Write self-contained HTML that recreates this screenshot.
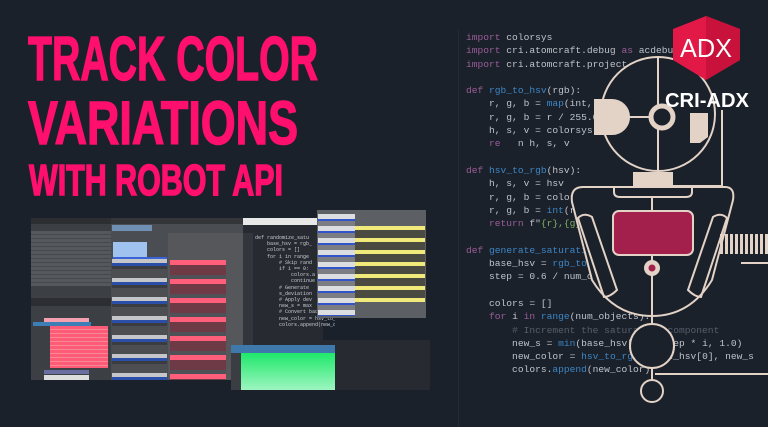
<!DOCTYPE html>
<html><head><meta charset="utf-8"><style>
*{margin:0;padding:0;box-sizing:border-box}
html,body{width:768px;height:427px}
body{background:#1b212b;overflow:hidden;position:relative;font-family:"Liberation Sans",sans-serif}
.a{position:absolute}
.code{position:absolute;left:466px;top:31px;font-family:"Liberation Mono",monospace;font-size:9.6px;line-height:13.3px;color:#bfc3c9;white-space:pre}
.k{color:#9a5d97}.f{color:#3c86c4}.g{color:#82b062}.c{color:#555e6a}
</style></head><body>
<div class="a" style="left:458px;top:30px;width:1px;height:397px;background:#242b35"></div>
<div class="code"><span class="k">import</span> colorsys
<span class="k">import</span> cri.atomcraft.debug <span class="k">as</span> acdebug
<span class="k">import</span> cri.atomcraft.project

<span class="k">def</span> <span class="f">rgb_to_hsv</span>(rgb):
    r, g, b = <span class="f">map</span>(int, rgb)
    r, g, b = r / 255.0, g / 255.0
    h, s, v = colorsys.rgb_to_hsv
    <span class="k">re  </span> n h, s, v

<span class="k">def</span> <span class="f">hsv_to_rgb</span>(hsv):
    h, s, v = hsv
    r, g, b = colorsys
    r, g, b = <span class="f">int</span>(r
    <span class="k">return</span> f"<span class="g">{r},{g}</span>"

<span class="k">def</span> <span class="f">generate_saturation</span>
    base_hsv = <span class="f">rgb_to_hsv</span>
    step = 0.6 / num_objects

    colors = []
    <span class="k">for</span> i <span class="k">in</span> <span class="f">range</span>(num_objects):
        <span class="c"># Increment the saturation component</span>
        new_s = <span class="f">min</span>(base_hsv[1] + step * i, 1.0)
        new_color = <span class="f">hsv_to_rgb</span>((base_hsv[0], new_s
        colors.<span class="f">append</span>(new_color)</div>

<svg class="a" style="left:0;top:0" width="768" height="427">
<g fill="none" stroke="#e3d2c6" stroke-width="2">
<circle cx="658" cy="114" r="57" fill="#1b212b"/>
<line x1="658" y1="57" x2="658" y2="172"/>
<path d="M722 150 V186 H672"/>
<line x1="722" y1="110" x2="722" y2="150"/>
<path d="M595 100 H612 A17 17 0 0 1 612 134 H595 Z" fill="#e3d2c6"/>
<line x1="620" y1="117" x2="650" y2="117"/>
<circle cx="662" cy="117" r="11" fill="#1b212b" stroke-width="5"/>
<path d="M690 113 H708 V137 L700 143 H690 Z" fill="#e3d2c6" stroke="none"/>
<rect x="633" y="172" width="40" height="15" fill="#e3d2c6" stroke="none"/>
<path d="M583 187 H725 Q735 187 733 200 L712 280 Q690 316 652 316 Q614 316 592 280 L572 202 Q570 187 583 187 Z" fill="#1b212b"/>
<path d="M614 188 V192 Q614 197 620 197 H686 Q692 197 692 192 V188"/>
<line x1="652" y1="197" x2="652" y2="212"/>
<path d="M578 218 Q584 212 592 217 L617 290 Q610 297 604 297 Z"/>
<path d="M727 218 Q721 212 713 217 L688 290 Q695 297 701 297 Z"/>
<rect x="613" y="211" width="80" height="44" rx="6" fill="#a3204d"/>
<line x1="652" y1="255" x2="652" y2="324"/>
<circle cx="652" cy="268" r="8" fill="#e3d2c6" stroke="none"/>
<circle cx="652" cy="268" r="3.5" fill="#a3204d" stroke="none"/>
<circle cx="652" cy="346" r="22" fill="#1b212b"/>
<line x1="652" y1="368" x2="652" y2="380"/>
<circle cx="652" cy="391" r="11"/>
<line x1="655" y1="374" x2="768" y2="374"/>
<line x1="741" y1="263" x2="768" y2="263"/>
</g>
<g fill="#e3d2c6">
<rect x="720" y="234" width="3" height="20"/><rect x="725" y="234" width="3" height="20"/><rect x="730" y="234" width="3" height="20"/><rect x="735" y="234" width="3" height="20"/><rect x="740" y="234" width="3" height="20"/><rect x="745" y="234" width="3" height="20"/><rect x="750" y="234" width="3" height="20"/><rect x="755" y="234" width="3" height="20"/><rect x="760" y="234" width="3" height="20"/><rect x="765" y="234" width="3" height="20"/>
</g>
<path d="M706 16 L740 29 V60 L706 80 L673 60 V29 Z" fill="#e21846"/>
<path d="M706 16 L740 29 V60 L706 80 Z" fill="#c8123c"/>
<text x="706" y="57" fill="#fff" font-size="26" text-anchor="middle" textLength="52" lengthAdjust="spacingAndGlyphs" font-family="Liberation Sans">ADX</text>
<text x="707" y="107" fill="#fff" font-size="20" font-weight="bold" text-anchor="middle" textLength="84" lengthAdjust="spacingAndGlyphs" font-family="Liberation Sans">CRI-ADX</text>
<g font-family="'Liberation Sans',sans-serif" font-weight="bold" fill="#ff0f6e" stroke="#ff0f6e" stroke-width="1.5">
<text x="28" y="80" font-size="62" textLength="290" lengthAdjust="spacingAndGlyphs">TRACK COLOR</text>
<text x="28" y="144" font-size="61" textLength="270" lengthAdjust="spacingAndGlyphs">VARIATIONS</text>
<text x="29" y="195" font-size="44" textLength="254" lengthAdjust="spacingAndGlyphs">WITH ROBOT API</text>
</g>
</svg>

<!-- collage -->
<div class="a" style="left:31px;top:218px;width:80px;height:162px;background:#3c3f44"></div>
<div class="a" style="left:31px;top:218px;width:80px;height:6px;background:#2c2e32"></div>
<div class="a" style="left:31px;top:231px;width:80px;height:55px;background:repeating-linear-gradient(#55585d 0 3px,#45484d 3px 4px)"></div>
<div class="a" style="left:31px;top:298px;width:80px;height:8px;background:#2c2e32"></div>
<div class="a" style="left:44px;top:318px;width:45px;height:7px;background:#f4a0ae"></div>
<div class="a" style="left:33px;top:322px;width:58px;height:4px;background:#3d7eb6"></div>
<div class="a" style="left:50px;top:326px;width:58px;height:42px;background:repeating-linear-gradient(#ff5a76 0 3px,#f48899 3px 4px)"></div>
<div class="a" style="left:44px;top:370px;width:45px;height:4px;background:#6a6ea0"></div>
<div class="a" style="left:44px;top:375px;width:45px;height:5px;background:#ddd"></div>
<div class="a" style="left:111px;top:218px;width:133px;height:162px;background:#4a4d52"></div>
<div class="a" style="left:111px;top:218px;width:133px;height:6px;background:#333538"></div>
<div class="a" style="left:112px;top:225px;width:40px;height:6px;background:#6f8fb3"></div>
<div class="a" style="left:168px;top:233px;width:76px;height:147px;background:#55575b"></div>
<div class="a" style="left:113px;top:242px;width:34px;height:17px;background:#9fc3ee"></div>
<div class="a" style="left:113px;top:257px;width:54px;height:5px;background:#3a63d8"></div>
<div class="a" style="left:112px;top:259px;width:55px;height:121px;background:repeating-linear-gradient(#c5c6ca 0 4px,#2b4ea8 4px 7px,#3a3c40 7px 10px,#4c4e52 10px 19px)"></div>
<div class="a" style="left:170px;top:260px;width:56px;height:120px;background:repeating-linear-gradient(#ff5f7a 0 5px,#6e3a45 5px 15px,#4f5156 15px 19px)"></div>
<div class="a" style="left:243px;top:218px;width:80px;height:162px;background:#272b31"></div>
<div class="a" style="left:243px;top:218px;width:80px;height:7px;background:#e8e8e8"></div>
<div class="a" style="left:243px;top:233px;width:10px;height:147px;background:#33373d"></div>
<div class="a" style="left:255px;top:235px;width:80px;height:95px;font-family:'Liberation Mono',monospace;font-size:5px;line-height:6.2px;color:#c8ccd2;white-space:pre;overflow:hidden">def randomize_satu
    base_hsv = rgb_
    colors = []
    for i in range
        # Skip rand
        if i == 0:
            colors.a
            continue
        # Generate
        s_deviation
        # Apply dev
        new_s = max
        # Convert back to RGB
        new_color = hsv_to_rgb((base_hsv[0], new_s, base_h
        colors.append(new_color)</div>
<div class="a" style="left:317px;top:210px;width:109px;height:108px;background:#5c5f64"></div>
<div class="a" style="left:318px;top:214px;width:37px;height:102px;background:repeating-linear-gradient(#dcdde0 0 5px,#2f55c9 5px 7px,#7b7d82 7px 12px)"></div>
<div class="a" style="left:355px;top:226px;width:70px;height:76px;background:repeating-linear-gradient(#f0ea7a 0 4px,#4a4a40 4px 12px)"></div>
<div class="a" style="left:320px;top:340px;width:110px;height:50px;background:#272b31"></div>
<div class="a" style="left:231px;top:345px;width:104px;height:8px;background:#3f79ab"></div>
<div class="a" style="left:231px;top:353px;width:10px;height:37px;background:#3a3d42"></div>
<div class="a" style="left:241px;top:353px;width:94px;height:37px;background:linear-gradient(#1ee86a,#9ef5c0)"></div>
</body></html>
